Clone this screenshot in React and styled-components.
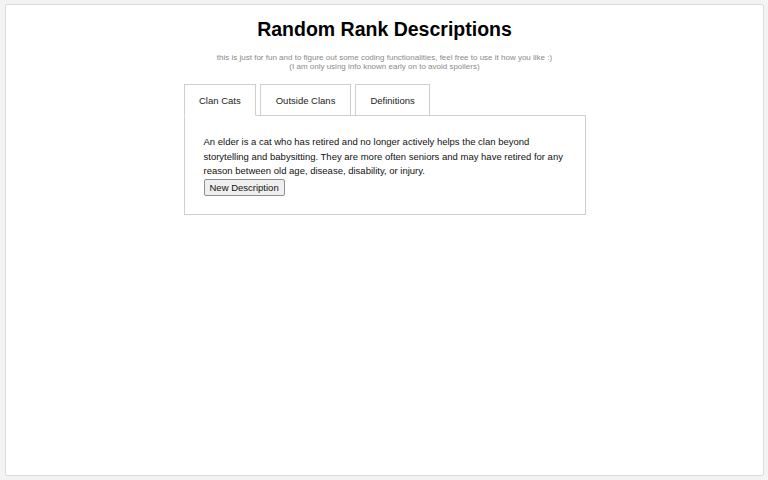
import React, { useState } from "react";
import styled, { createGlobalStyle } from "styled-components";

const GlobalStyle = createGlobalStyle`
  html, body {
    margin: 0;
    padding: 0;
    background: #f3f3f3;
    font-family: "Liberation Sans", Arial, sans-serif;
  }
`;

const Page = styled.div`
  padding: 4px 4px 4px 5px;
  height: 480px;
  box-sizing: border-box;
  display: flex;
`;

const Card = styled.div`
  flex: 1;
  background: #fff;
  border: 1px solid #dcdcdc;
  border-radius: 2px;
  display: flex;
  flex-direction: column;
  align-items: center;
`;

const Title = styled.h1`
  margin: 13px 0 0;
  font-size: 19.5px;
  font-weight: bold;
  color: #000;
`;

const Subtitle = styled.p`
  margin: 12px 0 0;
  font-size: 8px;
  line-height: 9px;
  color: #8a8a8a;
  text-align: center;
`;

const Tabs = styled.div`
  width: 402px;
  margin-top: 13px;
`;

const TabBar = styled.div`
  display: flex;
  gap: 4px;
  position: relative;
  z-index: 1;
  margin-bottom: -1px;
`;

const Tab = styled.button`
  font-family: inherit;
  font-size: 9.5px;
  color: #222;
  background: #fff;
  border: 1px solid #cfcfcf;
  border-bottom-color: ${p => (p.$active ? "#fff" : "#cfcfcf")};
  padding: 0 14.5px;
  height: 32px;
  cursor: pointer;
`;

const Panel = styled.div`
  border: 1px solid #cfcfcf;
  padding: 19px 19px 18px;
  font-size: 9.5px;
  line-height: 14.5px;
  color: #111;
`;

const NewButton = styled.button`
  display: block;
  font-family: inherit;
  font-size: 9.5px;
  color: #111;
  background: #efefef;
  border: 1px solid #8f8f8f;
  border-radius: 2px;
  padding: 0 5px;
  height: 17px;
`;

const tabs = ["Clan Cats", "Outside Clans", "Definitions"];

export default function App() {
  const [active, setActive] = useState("Clan Cats");
  return (
    <>
      <GlobalStyle />
      <Page>
        <Card>
          <Title>Random Rank Descriptions</Title>
          <Subtitle>
            this is just for fun and to figure out some coding functionalities, feel free to use it how you like :)
            <br />
            (I am only using info known early on to avoid spoilers)
          </Subtitle>
          <Tabs>
            <TabBar>
              {tabs.map(t => (
                <Tab key={t} $active={t === active} onClick={() => setActive(t)}>
                  {t}
                </Tab>
              ))}
            </TabBar>
            <Panel>
              An elder is a cat who has retired and no longer actively helps the clan beyond
              storytelling and babysitting. They are more often seniors and may have retired for any
              reason between old age, disease, disability, or injury.
              <NewButton>New Description</NewButton>
            </Panel>
          </Tabs>
        </Card>
      </Page>
    </>
  );
}
